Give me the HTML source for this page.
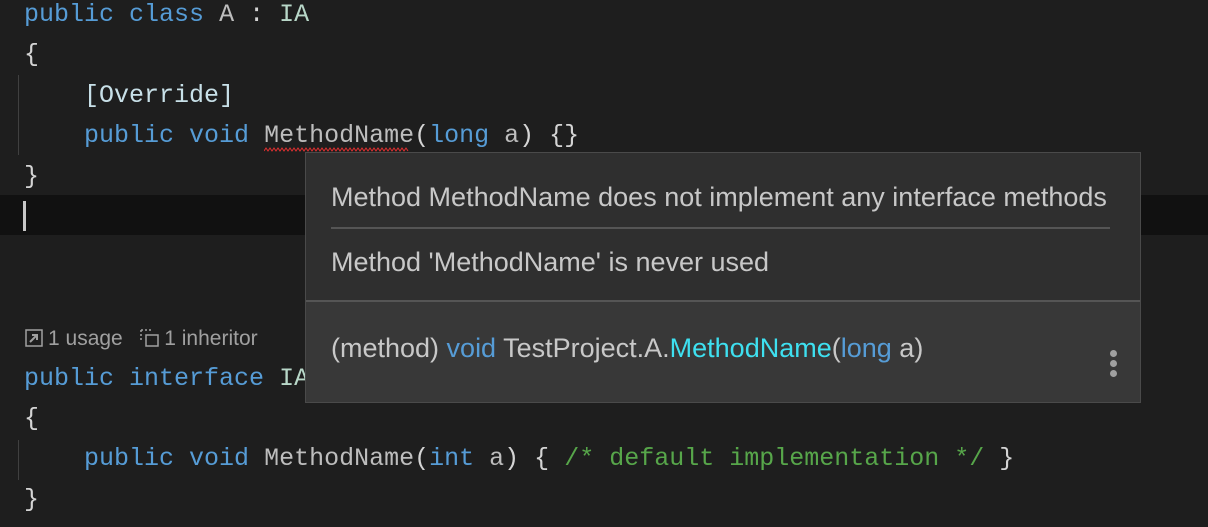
<!DOCTYPE html><html><head><style>
body{margin:0;width:1208px;height:527px;background:#1e1e1e;overflow:hidden;position:relative}
.code{position:absolute;left:24px;top:-5px;font:25px/40.4px "Liberation Mono",monospace;color:#d4d4d4;white-space:pre}
.k{color:#569cd6}.t{color:#b8d7c8}.g{color:#bdbdbd}.c{color:#57a64a}.o{color:#c8e0e8}
.cur{position:absolute;left:0;top:195px;width:1208px;height:40px;background:#111}
.caret{position:absolute;left:23px;top:201px;width:3px;height:30px;background:#c8c8c8}
.guide{position:absolute;left:18px;width:1px;background:#404040}
.lens{position:absolute;left:25px;top:327px;font:21px "Liberation Sans",sans-serif;color:#a0a0a0}
.pop{position:absolute;left:305px;top:152px;width:834px;height:249px;border:1px solid #4a4a4a;background:#2f2f2f;font:27px "Liberation Sans",sans-serif;color:#c8c8c8}
.tx{position:absolute;left:25px;white-space:nowrap}
.low{position:absolute;left:0;top:147px;width:834px;height:100px;background:#383838;border-top:2px solid #555}
.dots{position:absolute;left:804px;top:48px}
.dots i{display:block;width:7px;height:7px;border-radius:50%;background:#a0a0a0;margin-bottom:3px}
</style></head><body>
<div class="cur"></div>
<div class="guide" style="top:75px;height:80px"></div>
<div class="guide" style="top:440px;height:40px"></div>
<div class="code"><span class="k">public</span> <span class="k">class</span> <span class="g">A</span> : <span class="t">IA</span>
{
    <span class="o">[Override]</span>
    <span class="k">public</span> <span class="k">void</span> <span class="g">MethodName</span>(<span class="k">long</span> <span class="g">a</span>) {}
}




<span class="k">public</span> <span class="k">interface</span> <span class="t">IA</span>
{
    <span class="k">public</span> <span class="k">void</span> <span class="g">MethodName</span>(<span class="k">int</span> <span class="g">a</span>) { <span class="c">/* default implementation */</span> }
}</div>
<svg style="position:absolute;left:264px;top:147px" width="146" height="6"><path d="M0 4 L2 1 L4 4 L6 1 L8 4 L10 1 L12 4 L14 1 L16 4 L18 1 L20 4 L22 1 L24 4 L26 1 L28 4 L30 1 L32 4 L34 1 L36 4 L38 1 L40 4 L42 1 L44 4 L46 1 L48 4 L50 1 L52 4 L54 1 L56 4 L58 1 L60 4 L62 1 L64 4 L66 1 L68 4 L70 1 L72 4 L74 1 L76 4 L78 1 L80 4 L82 1 L84 4 L86 1 L88 4 L90 1 L92 4 L94 1 L96 4 L98 1 L100 4 L102 1 L104 4 L106 1 L108 4 L110 1 L112 4 L114 1 L116 4 L118 1 L120 4 L122 1 L124 4 L126 1 L128 4 L130 1 L132 4 L134 1 L136 4 L138 1 L140 4 L142 1 L144 4" fill="none" stroke="#e03030" stroke-width="1"/></svg>
<div class="caret"></div>
<div class="lens"><svg width="18" height="18" style="vertical-align:-2px;margin-right:5px"><rect x="1" y="1" width="16" height="16" fill="none" stroke="#a0a0a0" stroke-width="1.5"/><path d="M5 13 L12 6 M7 6 H12 V11" fill="none" stroke="#a0a0a0" stroke-width="2"/></svg>1 usage &nbsp;&nbsp;<svg width="20" height="18" style="vertical-align:-2px;margin-right:4px"><path d="M1 1h2M5 1h2M9 1h2M1 1v2M1 5v2M1 9v2" stroke="#a0a0a0" stroke-width="1.5" fill="none"/><rect x="6" y="6" width="12" height="11" fill="none" stroke="#a0a0a0" stroke-width="1.5"/></svg>1 inheritor</div>
<div class="pop">
<div class="tx" style="top:29px">Method MethodName does not implement any interface methods</div>
<div style="position:absolute;top:74px;left:25px;width:779px;height:2px;background:#555"></div>
<div class="tx" style="top:94px">Method 'MethodName' is never used</div>
<div class="low"><div class="tx" style="top:31px">(method) <span class="k">void</span> TestProject.A.<span style="color:#3ee0f0">MethodName</span>(<span class="k">long</span> a)</div>
<div class="dots"><i></i><i></i><i></i></div></div>
</div>
</body></html>
